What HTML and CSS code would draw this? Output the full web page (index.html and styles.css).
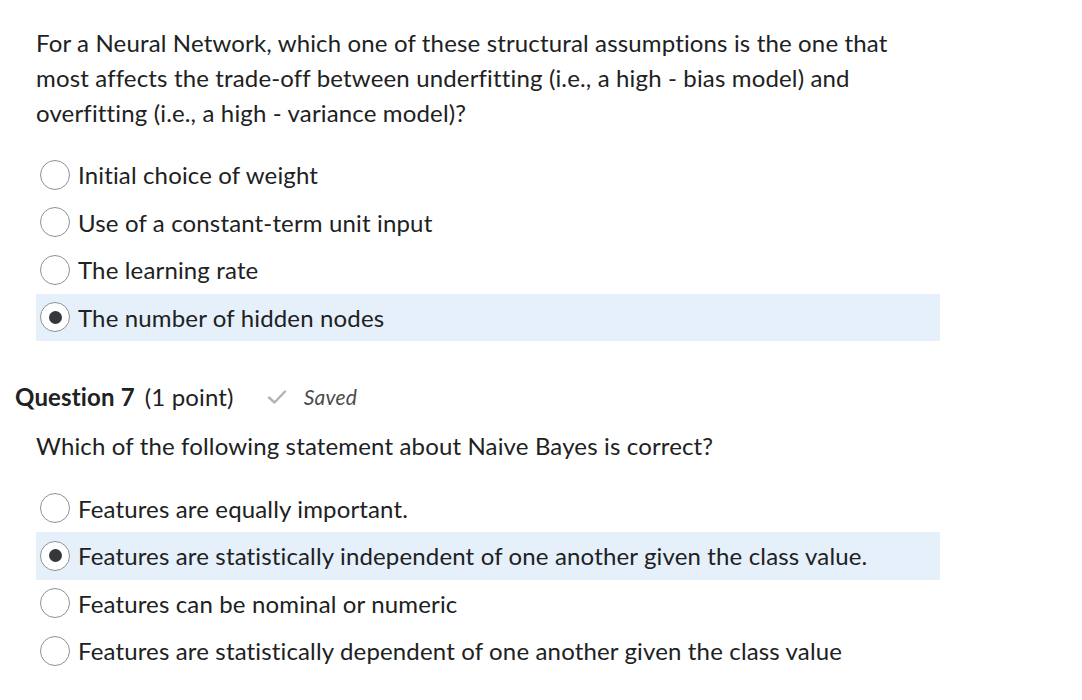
FILE: index.html
```html
<!DOCTYPE html>
<html lang="en">
<head>
<meta charset="utf-8">
<link rel="stylesheet" href="styles.css">
<title>Quiz</title>
</head>
<body>
<div class="page">
  <section class="question">
    <p class="stem">For a Neural Network, which one of these structural assumptions is the one that most affects the trade-off between underfitting (i.e., a high - bias model) and overfitting (i.e., a high - variance model)?</p>
    <ul class="options">
      <li class="option"><span class="radio"></span><span class="label">Initial choice of weight</span></li>
      <li class="option"><span class="radio"></span><span class="label">Use of a constant-term unit input</span></li>
      <li class="option"><span class="radio"></span><span class="label">The learning rate</span></li>
      <li class="option selected"><span class="radio checked"></span><span class="label">The number of hidden nodes</span></li>
    </ul>
  </section>

  <section class="question q7">
    <h2 class="qhead"><strong>Question 7</strong> (1 point)
      <span class="saved"><svg class="check" width="20" height="16" viewBox="0 0 20 16"><path d="M2 8.5 L7.5 13.5 L18 2.5" fill="none" stroke="#b3b3b3" stroke-width="2.4" stroke-linecap="round" stroke-linejoin="round"/></svg><em>Saved</em></span>
    </h2>
    <p class="stem">Which of the following statement about Naive Bayes is correct?</p>
    <ul class="options">
      <li class="option"><span class="radio"></span><span class="label">Features are equally important.</span></li>
      <li class="option selected"><span class="radio checked"></span><span class="label">Features are statistically independent of one another given the class value.</span></li>
      <li class="option"><span class="radio"></span><span class="label">Features can be nominal or numeric</span></li>
      <li class="option"><span class="radio"></span><span class="label">Features are statistically dependent of one another given the class value</span></li>
    </ul>
  </section>
</div>
</body>
</html>
```

FILE: styles.css
```css
html, body {
  margin: 0;
  padding: 0;
  background: #ffffff;
}

body {
  font-family: Lato, "Open Sans", sans-serif;
  color: #202122;
  font-size: 24px;
  line-height: 35px;
  letter-spacing: 0.15px;
  font-variant-ligatures: none;
}

.page {
  padding: 25px 0 0 15px;
}

.stem {
  margin: 0 0 0 21px;
  width: 880px;
}

.options {
  list-style: none;
  margin: 21px 0 0 21px;
  padding: 0;
  width: 904px;
}

.option {
  display: flex;
  align-items: center;
  gap: 8px;
  height: 47.5px;
  padding-left: 4px;
}

.option.selected {
  background: #e6f0fb;
}

.radio {
  flex: none;
  box-sizing: border-box;
  width: 30px;
  height: 30px;
  border-radius: 50%;
  border: 1.5px solid #8e9194;
  background: #ffffff;
  display: flex;
  align-items: center;
  justify-content: center;
}

.radio.checked::after {
  content: "";
  width: 13px;
  height: 13px;
  border-radius: 50%;
  background: #35383b;
}

.q7 {
  margin-top: 38px;
}

.qhead {
  margin: 0;
  font-size: 24px;
  line-height: 35px;
  font-weight: 400;
  display: flex;
  align-items: center;
}

.qhead strong {
  font-weight: 700;
  margin-right: 10px;
}

.saved {
  display: inline-flex;
  align-items: center;
  margin-left: 33px;
  color: #494c4e;
  font-size: 21px;
  letter-spacing: 0.2px;
}

.saved .check {
  margin-right: 17px;
}

.q7 .stem {
  margin-top: 14px;
}

.q7 .options {
  margin-top: 21.5px;
}
```
